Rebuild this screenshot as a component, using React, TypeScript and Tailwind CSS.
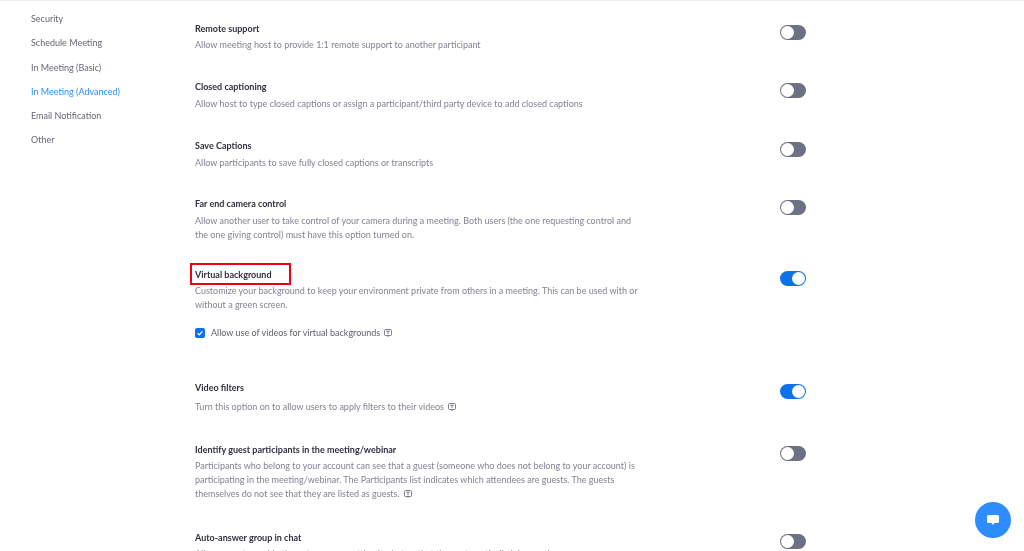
const navItems = [
    { label: 'Security' },
    { label: 'Schedule Meeting' },
    { label: 'In Meeting (Basic)' },
    { label: 'In Meeting (Advanced)', active: true },
    { label: 'Email Notification' },
    { label: 'Other' },
];

const InfoIcon = () => (
    <svg width="8" height="8" viewBox="0 0 8 8" fill="none" className="ml-[4px] inline-block align-[-1px]">
        <rect x="0.500" y="0.500" width="7" height="6" rx="1" stroke="#5f6072" strokeWidth="0.800" />
        <path d="M2.200 2.200h3.600M4 2.200v3M3.400 7.600h1.200" stroke="#5f6072" strokeWidth="0.800" />
    </svg>
);

const Toggle = ({ on }: { on?: boolean }) => (
    <div className={`flex h-[15px] w-[26px] shrink-0 items-center rounded-full px-[1px] ${on ? 'justify-end bg-[#0e71eb]' : 'justify-start bg-[#6e7083]'}`}>
        <div className="h-[13px] w-[13px] rounded-full bg-white" />
    </div>
);

const Row = ({ title, on, rowClass, children }: { title: string; on?: boolean; rowClass: string; children?: React.ReactNode }) => (
    <div className={`flex items-start ${rowClass}`}>
        <div className="w-[448px]">
            <h3 className="text-[9px] leading-[16px] font-bold text-[#2f2f40]">{title}</h3>
            {children}
        </div>
        <div className="ml-[137px] mt-[4px]">
            <Toggle on={on} />
        </div>
    </div>
);

const Desc = ({ children, className = '' }: { children: React.ReactNode; className?: string }) => (
    <p className={`text-[9px] leading-[14px] text-[#838394] ${className}`}>{children}</p>
);

export default function App() {
    return (
        <div className="relative h-[551px] w-[1024px] overflow-hidden border-t border-[#ededf4] bg-white font-['Lato',sans-serif] blur-[0.4px]">
            <div className="flex">
                <nav className="w-[195px] shrink-0 pl-[31px] pt-[6px]">
                    {navItems.map((item) => (
                        <div
                            key={item.label}
                            className={`h-[24.3px] text-[9px] leading-[24px] ${item.active ? 'text-[#2d8cff]' : 'text-[#666677]'}`}
                        >
                            {item.label}
                        </div>
                    ))}
                </nav>
                <main className="flex-1 pt-[20px]">
                    <Row title="Remote support" rowClass="h-[58.300px]">
                        <Desc className="mt-[1px]">Allow meeting host to provide 1:1 remote support to another participant</Desc>
                    </Row>
                    <Row title="Closed captioning" rowClass="h-[58.300px]">
                        <Desc className="mt-[2px]">Allow host to type closed captions or assign a participant/third party device to add closed captions</Desc>
                    </Row>
                    <Row title="Save Captions" rowClass="h-[58.300px]">
                        <Desc className="mt-[2px]">Allow participants to save fully closed captions or transcripts</Desc>
                    </Row>
                    <Row title="Far end camera control" rowClass="h-[71px]">
                        <Desc className="mt-[2px]">
                            Allow another user to take control of your camera during a meeting. Both users (the one requesting control and the one giving control) must have this option turned on.
                        </Desc>
                    </Row>
                    <Row title="Virtual background" on rowClass="h-[113.500px]">
                        <div className="relative">
                            <div className="absolute left-[-5px] top-[-20px] h-[22px] w-[101px] border-2 border-[#ee0011]" />
                        </div>
                        <Desc className="mt-[1px]">
                            Customize your background to keep your environment private from others in a meeting. This can be used with or without a green screen.
                        </Desc>
                        <div className="mt-[13px] flex items-center">
                            <div className="flex h-[10px] w-[10px] items-center justify-center rounded-[2px] bg-[#0e71eb]">
                                <svg width="8" height="8" viewBox="0 0 8 8" fill="none">
                                    <path d="M1.600 4.200l1.700 1.600 3.100-3.400" stroke="white" strokeWidth="1.200" />
                                </svg>
                            </div>
                            <span className="ml-[6px] text-[9px] leading-[16px] text-[#5f5f70]">Allow use of videos for virtual backgrounds</span>
                            <InfoIcon />
                        </div>
                    </Row>
                    <Row title="Video filters" on rowClass="h-[62px]">
                        <Desc className="mt-[4px]">
                            Turn this option on to allow users to apply filters to their videos
                            <InfoIcon />
                        </Desc>
                    </Row>
                    <Row title="Identify guest participants in the meeting/webinar" rowClass="h-[88px]">
                        <Desc className="mt-[1px]">
                            Participants who belong to your account can see that a guest (someone who does not belong to your account) is participating in the meeting/webinar. The Participants list indicates which attendees are guests. The guests themselves do not see that they are listed as guests.
                            <InfoIcon />
                        </Desc>
                    </Row>
                    <Row title="Auto-answer group in chat" rowClass="h-[60px]">
                        <Desc className="mt-[1px]">Allow users to enable the auto-answer setting in chat so that they automatically join meetings</Desc>
                    </Row>
                </main>
            </div>
            <button className="absolute left-[975px] top-[501px] flex h-[36px] w-[36px] items-center justify-center rounded-full bg-[#2d8cff]">
                <svg width="14" height="13" viewBox="0 0 14 13" fill="white">
                    <path d="M2.500 1h9A1.500 1.500 0 0 1 13 2.500v5A1.500 1.500 0 0 1 11.500 9H8.500L7 11 5.500 9h-3A1.500 1.500 0 0 1 1 7.500v-5A1.500 1.500 0 0 1 2.500 1z" />
                </svg>
            </button>
        </div>
    );
}
